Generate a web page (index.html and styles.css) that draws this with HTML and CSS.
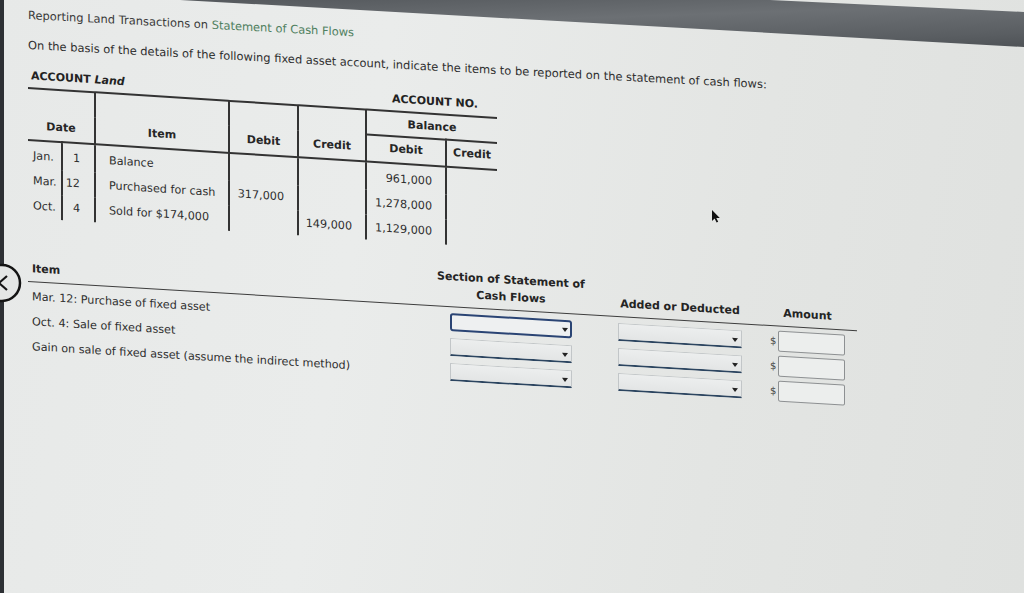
FILE: index.html
```html
<!DOCTYPE html>
<html lang="en">
<head>
<meta charset="utf-8">
<title>Reporting Land Transactions on Statement of Cash Flows</title>
<link rel="stylesheet" href="styles.css">
</head>
<body>
<div class="bezel-left"></div>
<div class="bezel-top"></div>

<main class="sheet">
  <h1 class="title">Reporting Land Transactions on <span class="link">Statement of Cash Flows</span></h1>
  <p class="intro">On the basis of the details of the following fixed asset account, indicate the items to be reported on the statement of cash flows:</p>

  <section class="ledger">
    <div class="ledger-head">
      <span>ACCOUNT <i>Land</i></span>
      <span>ACCOUNT NO.</span>
    </div>
    <table class="ledger-table">
      <colgroup>
        <col class="c-month"><col class="c-day"><col class="c-item"><col class="c-debit"><col class="c-credit"><col class="c-bdebit"><col class="c-bcredit">
      </colgroup>
      <thead>
        <tr class="h-top">
          <th colspan="2" rowspan="2" class="bl-r">Date</th>
          <th rowspan="2" class="bl-r">Item</th>
          <th rowspan="2" class="bl-r">Debit</th>
          <th rowspan="2" class="bl-r">Credit</th>
          <th colspan="2" class="bal">Balance</th>
        </tr>
        <tr class="h-sub">
          <th class="bl-r">Debit</th>
          <th>Credit</th>
        </tr>
      </thead>
      <tbody>
        <tr>
          <td class="month bl-r">Jan.</td><td class="day bl-r">1</td><td class="item bl-r">Balance</td><td class="num bl-r"></td><td class="num bl-r"></td><td class="num bl-r">961,000</td><td class="num"></td>
        </tr>
        <tr>
          <td class="month bl-r">Mar.</td><td class="day bl-r">12</td><td class="item bl-r">Purchased for cash</td><td class="num bl-r">317,000</td><td class="num bl-r"></td><td class="num bl-r">1,278,000</td><td class="num"></td>
        </tr>
        <tr>
          <td class="month bl-r">Oct.</td><td class="day bl-r">4</td><td class="item bl-r">Sold for $174,000</td><td class="num bl-r"></td><td class="num bl-r">149,000</td><td class="num bl-r">1,129,000</td><td class="num"></td>
        </tr>
      </tbody>
    </table>
  </section>

  <section class="answer">
    <div class="answer-head">
      <div class="col-item">Item</div>
      <div class="col-section"><span class="head-box w-section"><span>Section of Statement of<br>Cash Flows</span></span></div>
      <div class="col-added"><span class="head-box w-added"><span>Added or Deducted</span></span></div>
      <div class="col-amount"><span class="head-box w-amount"><span>Amount</span></span></div>
    </div>

    <div class="answer-row first">
      <div class="col-item">Mar. 12: Purchase of fixed asset</div>
      <div class="col-section"><span class="pick pick-section focused"><select aria-label="Section"><option></option></select></span></div>
      <div class="col-added"><span class="pick pick-added"><select aria-label="Added or Deducted"><option></option></select></span></div>
      <div class="col-amount"><span class="dollar">$</span><input class="amt" type="text" aria-label="Amount"></div>
    </div>
    <div class="answer-row">
      <div class="col-item">Oct. 4: Sale of fixed asset</div>
      <div class="col-section"><span class="pick pick-section"><select aria-label="Section"><option></option></select></span></div>
      <div class="col-added"><span class="pick pick-added"><select aria-label="Added or Deducted"><option></option></select></span></div>
      <div class="col-amount"><span class="dollar">$</span><input class="amt" type="text" aria-label="Amount"></div>
    </div>
    <div class="answer-row">
      <div class="col-item">Gain on sale of fixed asset (assume the indirect method)</div>
      <div class="col-section"><span class="pick pick-section"><select aria-label="Section"><option></option></select></span></div>
      <div class="col-added"><span class="pick pick-added"><select aria-label="Added or Deducted"><option></option></select></span></div>
      <div class="col-amount"><span class="dollar">$</span><input class="amt" type="text" aria-label="Amount"></div>
    </div>
  </section>
</main>

<div class="nav-back" aria-hidden="true">
  <svg width="26" height="40" viewBox="0 0 26 40"><circle cx="4" cy="20" r="18" fill="#e4e6e5" stroke="#141414" stroke-width="2.5"/><path d="M9 13 L1 20 L9 27" fill="none" stroke="#141414" stroke-width="2.2"/></svg>
</div>
<svg class="cursor" width="10" height="14" viewBox="0 0 10 14" aria-hidden="true"><path d="M1 1 L1 12 L3.6 9.6 L5.6 13.5 L7.2 12.7 L5.3 9 L8.8 9 Z" fill="#111"/></svg>
</body>
</html>
```

FILE: styles.css
```css
html, body {
  margin: 0;
  height: 100%;
}
body {
  position: relative;
  overflow: hidden;
  width: 1024px;
  height: 593px;
  background: linear-gradient(100deg, #e7e9e8 0%, #eaeceb 35%, #e3e5e3 70%, #dfe1df 100%);
  font-family: "DejaVu Sans", Verdana, sans-serif;
  color: #313131;
}

.bezel-left {
  position: absolute;
  left: 0;
  top: 0;
  width: 4px;
  height: 593px;
  background: #2d3034;
}
.bezel-top {
  position: absolute;
  left: 0;
  top: 0;
  width: 1024px;
  height: 50px;
  background: linear-gradient(178deg, #505458 0%, #6c7074 45%, #5a5e62 80%, #4c5054 100%);
  clip-path: polygon(180px 0, 770px 0, 1024px 12px, 1024px 47px);
}

.sheet {
  transform: skewY(3.05deg);
  transform-origin: 28px 0;
  padding: 8px 0 0 28px;
  font-size: 11.2px;
  line-height: 14px;
}

.title {
  margin: 0;
  font-size: 11.45px;
  font-weight: normal;
  line-height: 14px;
  color: #3a3a3a;
}
.link {
  color: #4f7f60;
}
.intro {
  margin: 16px 0 0;
  font-size: 11.45px;
  color: #2f2f2f;
}

.ledger {
  margin-top: 17px;
  width: 469px;
  transform: skewY(0.6deg);
  transform-origin: 0 0;
}
.ledger-head {
  display: flex;
  justify-content: space-between;
  padding: 0 19px 0 3px;
  font-weight: bold;
  font-size: 11px;
  line-height: 14px;
  color: #222;
}
.ledger-table {
  margin-top: 4px;
  width: 469px;
  table-layout: fixed;
  border-collapse: collapse;
  border-top: 2px solid #333;
}
.c-month { width: 34px; }
.c-day { width: 33px; }
.c-item { width: 134px; }
.c-debit { width: 69px; }
.c-credit { width: 68px; }
.c-bdebit { width: 80px; }
.c-bcredit { width: 51px; }

.ledger-table th {
  padding: 0 0 6px;
  font-size: 11px;
  font-weight: bold;
  line-height: 14px;
  text-align: center;
  vertical-align: bottom;
  color: #262626;
  border-bottom: 2px solid #333;
}
.ledger-table th.bal {
  padding-bottom: 4px;
}
.ledger-table .bl-r {
  border-right: 2px solid #333;
}
.h-top {
  height: 25px;
}
.h-sub {
  height: 27px;
}
.ledger-table td {
  height: 25px;
  padding: 0;
  font-size: 11.2px;
  line-height: 14px;
  vertical-align: middle;
  white-space: nowrap;
  color: #2e2e2e;
}
.ledger-table tbody tr:first-child td {
  padding-top: 2px;
}
.month {
  padding-left: 5px !important;
  text-align: left;
}
.day {
  text-align: right;
  padding-right: 14px !important;
}
.item {
  padding-left: 13px !important;
  text-align: left;
}
.num {
  text-align: right;
  padding-right: 13px !important;
}

.answer {
  margin-top: 21px;
  width: 829px;
  transform: skewY(0.35deg);
  transform-origin: 0 0;
}
.answer-head,
.answer-row {
  display: grid;
  grid-template-columns: 422px 168px 152px 87px;
}
.answer-head {
  box-sizing: border-box;
  height: 43px;
  align-items: end;
  padding-bottom: 4px;
  border-bottom: 1px solid #3d3d3d;
  font-weight: bold;
  font-size: 11px;
  line-height: 17px;
  color: #242424;
}
.head-box {
  display: flex;
  justify-content: center;
  text-align: center;
  white-space: nowrap;
}
.w-section { width: 122px; }
.w-added { width: 124px; }
.w-amount { width: 75px; }

.answer-row {
  height: 25px;
  align-items: center;
  font-size: 11.2px;
  color: #2e2e2e;
}
.answer-row.first {
  margin-top: 2px;
}
.col-item {
  padding-left: 4px;
  white-space: nowrap;
}

.pick {
  position: relative;
  display: block;
  height: 18px;
}
.pick-section { width: 122px; }
.pick-added { width: 124px; }
.pick select {
  -webkit-appearance: none;
  appearance: none;
  display: block;
  box-sizing: border-box;
  width: 100%;
  height: 100%;
  margin: 0;
  padding: 0 14px 0 4px;
  background: linear-gradient(#eceeee, #e3e5e5);
  border: 1px solid #c2c6c8;
  border-bottom: 2px solid #2c4560;
  border-radius: 1px;
  font: inherit;
  color: #333;
  outline: none;
}
.pick::after {
  content: "";
  position: absolute;
  right: 4px;
  top: 8px;
  border-left: 3px solid transparent;
  border-right: 3px solid transparent;
  border-top: 4px solid #222;
}
.pick.focused select {
  background: #eef0f1;
  border: 2px solid #2a4474;
  border-radius: 3px;
}

.col-amount {
  display: flex;
  align-items: center;
}
.dollar {
  width: 8px;
  font-size: 10px;
  color: #444;
}
.amt {
  box-sizing: border-box;
  width: 67px;
  height: 21px;
  margin: 0;
  padding: 0 3px;
  background: #eceeed;
  border: 1px solid #8d9092;
  border-radius: 2px;
  font: inherit;
  outline: none;
}

.nav-back {
  position: absolute;
  left: -2px;
  top: 263px;
  width: 26px;
  height: 40px;
}
.nav-back svg {
  display: block;
}
.cursor {
  position: absolute;
  left: 711px;
  top: 209px;
}
```
